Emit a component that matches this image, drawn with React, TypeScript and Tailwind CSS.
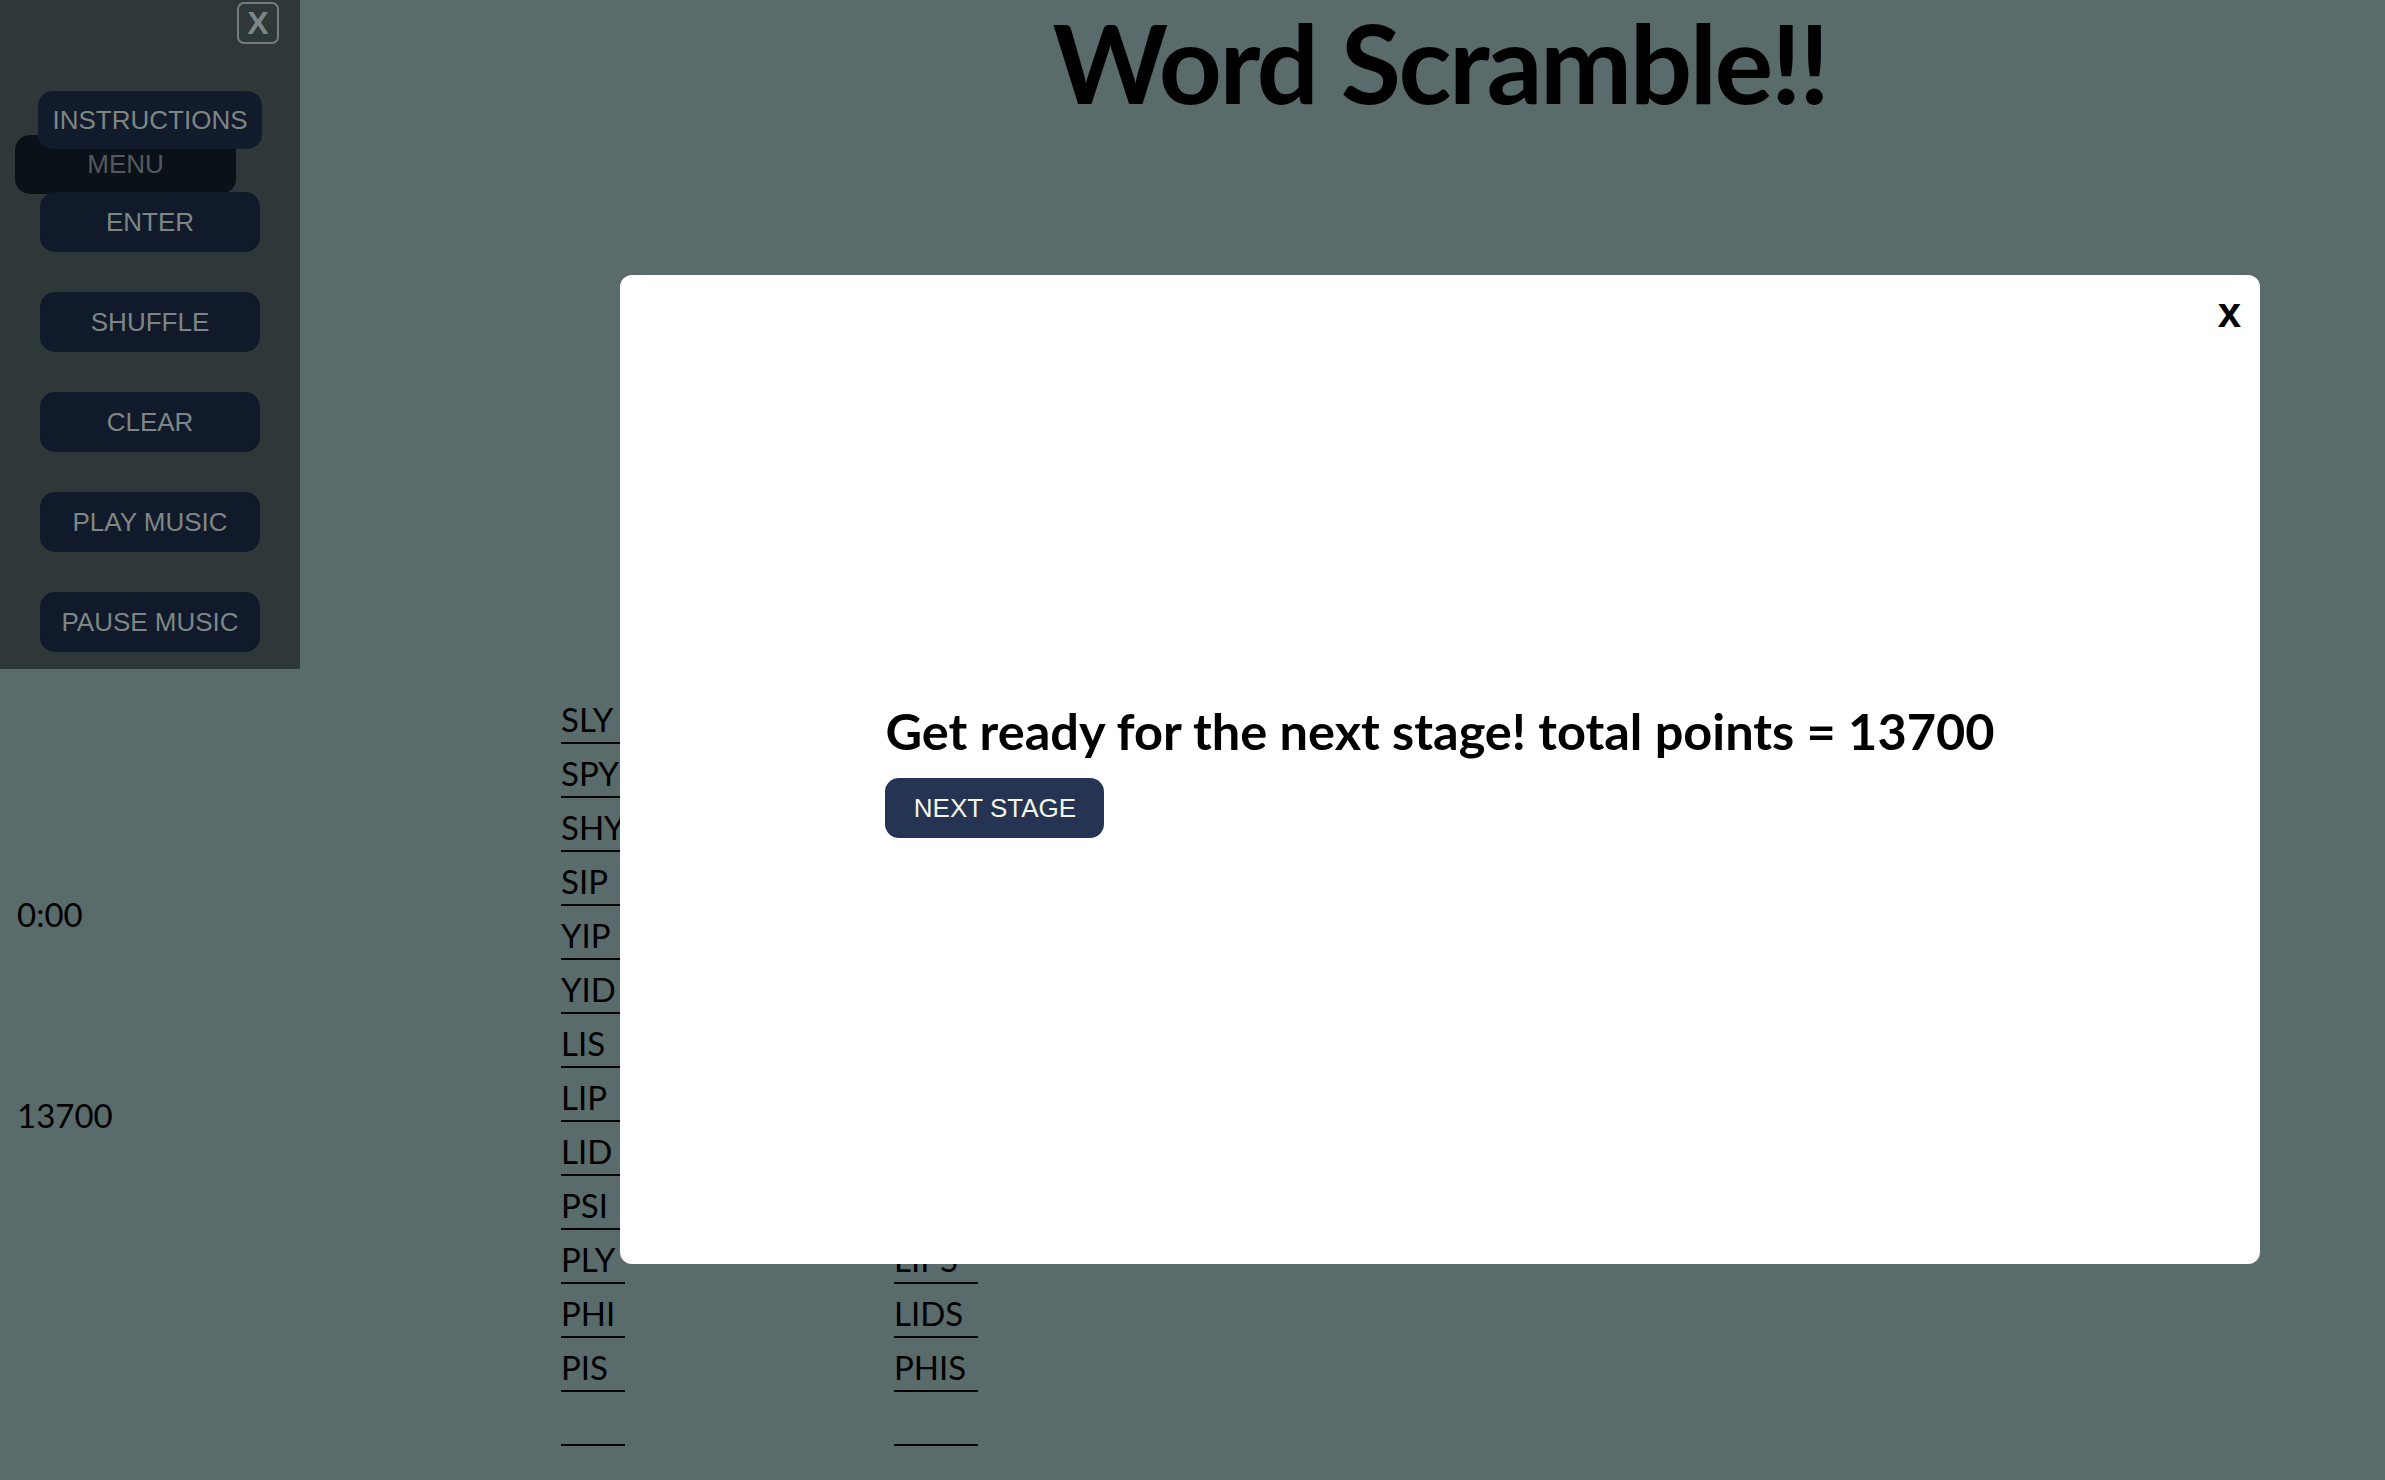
import { useState } from "react";

const colOne = ["SLY", "SPY", "SHY", "SIP", "YIP", "YID", "LIS", "LIP", "LID", "PSI", "PLY", "PHI", "PIS", ""];
const colTwo = ["SLIP", "LISP", "SHIP", "HIPS", "YIPS", "PISH", "SPIY", "LIPY", "SLID", "PILS", "LIPS", "LIDS", "PHIS", ""];

const menuItems = ["ENTER", "SHUFFLE", "CLEAR", "PLAY MUSIC", "PAUSE MUSIC"];

function WordColumn({ words, width }: { words: string[]; width: string }) {
  return (
    <ul className={`flex flex-col ${width}`}>
      {words.map((w, i) => (
        <li
          key={i}
          className="pt-[12px] pb-[6px] border-b-2 border-black text-[33px] leading-[34px] text-black h-[54px] whitespace-nowrap"
        >
          {w}
        </li>
      ))}
    </ul>
  );
}

export default function App() {
  const [modalOpen, setModalOpen] = useState(true);
  const [menuOpen, setMenuOpen] = useState(true);

  return (
    <div className="relative min-h-screen w-full overflow-hidden bg-[#5a6b6b] font-['Lato','Noto_Sans',sans-serif]">
      {/* title */}
      <header className="pl-[495px] pt-[1px] text-center">
        <h1 className="text-[110px] leading-[120px] tracking-[-2.5px] font-bold text-black">Word Scramble!!</h1>
      </header>

      {/* board */}
      <main className="flex mt-[569px]">
        <div className="w-[561px] pl-[17px] text-[33px] leading-[40px] text-black">
          <p className="mt-[204px]">0:00</p>
          <p className="mt-[161px]">13700</p>
        </div>
        <WordColumn words={colOne} width="w-[64px]" />
        <div className="w-[269px]" />
        <WordColumn words={colTwo} width="w-[84px]" />
      </main>

      {/* side menu */}
      {menuOpen && (
        <aside className="absolute top-0 left-0 w-[300px] h-[669px] bg-[#2e3839] font-['Liberation_Sans',Arial,sans-serif]">
          <button
            onClick={() => setMenuOpen(false)}
            className="absolute left-[237px] top-[2px] w-[42px] h-[42px] rounded-[7px] border-2 border-[#767c7c] flex items-center justify-center text-[32px] font-bold leading-none text-[#7f8685]"
          >
            X
          </button>
          <button className="absolute left-[15px] top-[135px] w-[221px] h-[59px] rounded-[15px] bg-[#0b1119] text-[26px] text-[#54595a]">
            MENU
          </button>
          <button className="absolute left-[38px] top-[91px] w-[224px] h-[58px] rounded-[15px] bg-[#121b2c] text-[26px] text-[#7e8684]">
            INSTRUCTIONS
          </button>
          <div className="relative flex flex-col gap-[40px] pt-[192px] pl-[40px]">
            {menuItems.map((m) => (
              <button
                key={m}
                className="w-[220px] h-[60px] rounded-[15px] bg-[#111a2b] text-[26px] text-[#7e8684]"
              >
                {m}
              </button>
            ))}
          </div>
        </aside>
      )}

      {/* stage modal */}
      {modalOpen && (
        <div className="absolute left-[620px] top-[275px] w-[1640px] h-[989px] rounded-[12px] bg-white flex items-center justify-center">
          <button
            onClick={() => setModalOpen(false)}
            className="absolute right-[19px] top-[17px] text-[42px] leading-[42px] font-bold text-black font-['Liberation_Sans',Arial,sans-serif]"
          >
            x
          </button>
          <div className="flex flex-col items-start">
            <h2 className="text-[50.5px] leading-[60px] font-bold text-black">
              Get ready for the next stage! total points = 13700
            </h2>
            <button className="mt-[17px] w-[219px] h-[60px] rounded-[14px] bg-[#243452] text-[26px] text-[#f3f5e6] font-['Liberation_Sans',Arial,sans-serif]">
              NEXT STAGE
            </button>
          </div>
        </div>
      )}
    </div>
  );
}
